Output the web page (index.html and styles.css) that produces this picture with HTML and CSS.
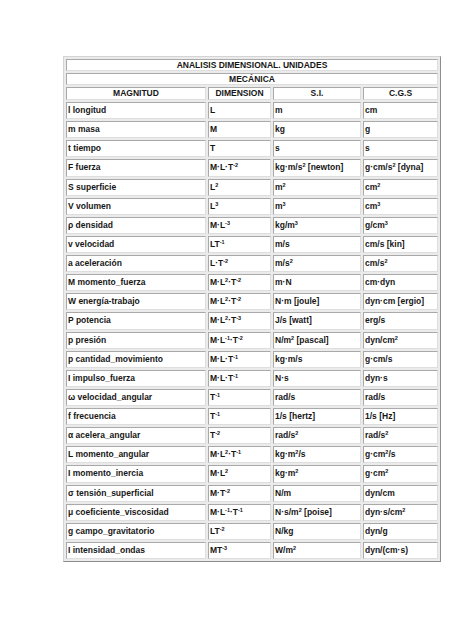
FILE: index.html
```html
<!DOCTYPE html>
<html lang="es">
<head>
<meta charset="utf-8">
<title>Analisis dimensional</title>
<link rel="stylesheet" href="styles.css">
</head>
<body>
<table class="units">
  <colgroup>
    <col class="c1"><col class="c2"><col class="c3"><col class="c4">
  </colgroup>
  <tr class="title"><th colspan="4">ANALISIS DIMENSIONAL. UNIDADES</th></tr>
  <tr class="section"><th colspan="4">MECÁNICA</th></tr>
  <tr class="head"><th>MAGNITUD</th><th>DIMENSION</th><th>S.I.</th><th>C.G.S</th></tr>
  <tr><td>l longitud</td><td>L</td><td>m</td><td>cm</td></tr>
  <tr><td>m masa</td><td>M</td><td>kg</td><td>g</td></tr>
  <tr><td>t tiempo</td><td>T</td><td>s</td><td>s</td></tr>
  <tr><td>F fuerza</td><td>M·L·T<sup>-2</sup></td><td>kg·m/s<sup>2</sup> [newton]</td><td>g·cm/s<sup>2</sup> [dyna]</td></tr>
  <tr><td>S superficie</td><td>L<sup>2</sup></td><td>m<sup>2</sup></td><td>cm<sup>2</sup></td></tr>
  <tr><td>V volumen</td><td>L<sup>3</sup></td><td>m<sup>3</sup></td><td>cm<sup>3</sup></td></tr>
  <tr><td>ρ densidad</td><td>M·L<sup>-3</sup></td><td>kg/m<sup>3</sup></td><td>g/cm<sup>3</sup></td></tr>
  <tr><td>v velocidad</td><td>LT<sup>-1</sup></td><td>m/s</td><td>cm/s [kin]</td></tr>
  <tr><td>a aceleración</td><td>L·T<sup>-2</sup></td><td>m/s<sup>2</sup></td><td>cm/s<sup>2</sup></td></tr>
  <tr><td>M momento_fuerza</td><td>M·L<sup>2</sup>·T<sup>-2</sup></td><td>m·N</td><td>cm·dyn</td></tr>
  <tr><td>W energía-trabajo</td><td>M·L<sup>2</sup>·T<sup>-2</sup></td><td>N·m [joule]</td><td>dyn·cm [ergio]</td></tr>
  <tr><td>P potencia</td><td>M·L<sup>2</sup>·T<sup>-3</sup></td><td>J/s [watt]</td><td>erg/s</td></tr>
  <tr><td>p presión</td><td>M·L<sup>-1</sup>·T<sup>-2</sup></td><td>N/m<sup>2</sup> [pascal]</td><td>dyn/cm<sup>2</sup></td></tr>
  <tr><td>p cantidad_movimiento</td><td>M·L·T<sup>-1</sup></td><td>kg·m/s</td><td>g·cm/s</td></tr>
  <tr><td>I impulso_fuerza</td><td>M·L·T<sup>-1</sup></td><td>N·s</td><td>dyn·s</td></tr>
  <tr><td>ω velocidad_angular</td><td>T<sup>-1</sup></td><td>rad/s</td><td>rad/s</td></tr>
  <tr><td>f frecuencia</td><td>T<sup>-1</sup></td><td>1/s [hertz]</td><td>1/s [Hz]</td></tr>
  <tr><td>α acelera_angular</td><td>T<sup>-2</sup></td><td>rad/s<sup>2</sup></td><td>rad/s<sup>2</sup></td></tr>
  <tr><td>L momento_angular</td><td>M·L<sup>2</sup>·T<sup>-1</sup></td><td>kg·m<sup>2</sup>/s</td><td>g·cm<sup>2</sup>/s</td></tr>
  <tr><td>I momento_inercia</td><td>M·L<sup>2</sup></td><td>kg·m<sup>2</sup></td><td>g·cm<sup>2</sup></td></tr>
  <tr><td>σ tensión_superficial</td><td>M·T<sup>-2</sup></td><td>N/m</td><td>dyn/cm</td></tr>
  <tr><td>μ coeficiente_viscosidad</td><td>M·L<sup>-1</sup>·T<sup>-1</sup></td><td>N·s/m<sup>2</sup> [poise]</td><td>dyn·s/cm<sup>2</sup></td></tr>
  <tr><td>g campo_gravitatorio</td><td>LT<sup>-2</sup></td><td>N/kg</td><td>dyn/g</td></tr>
  <tr><td>I intensidad_ondas</td><td>MT<sup>-3</sup></td><td>W/m<sup>2</sup></td><td>dyn/(cm·s)</td></tr>
</table>
</body>
</html>
```
FILE: styles.css
```css
html, body {
  margin: 0;
  padding: 0;
  background: #ffffff;
}

body {
  padding: 56px 0 0 63px;
  font-family: "Liberation Sans", Arial, sans-serif;
  font-weight: bold;
  font-size: 8.5px;
  color: #161616;
}

.units {
  width: 378px;
  table-layout: fixed;
  border-collapse: separate;
  border-spacing: 2px;
  border: 1px solid;
  border-color: #d4d4d4 #8e8e8e #8e8e8e #d4d4d4;
  background: #ebebeb;
}

.c1 { width: 140px; }
.c2 { width: 63px; }
.c3 { width: 88px; }
.c4 { width: 75px; }

.units th,
.units td {
  box-sizing: border-box;
  border: 1px solid;
  border-color: #a9a9a9 #dedede #dedede #a9a9a9;
  background: #ffffff;
  padding: 0 1px;
  line-height: 9px;
  height: 17.13px;
  white-space: nowrap;
  vertical-align: middle;
  font-weight: bold;
}

.units td {
  text-align: left;
}

.units th {
  text-align: center;
}

.title th { height: 12px; }
.section th { height: 11px; padding-top: 1px; }
.head th { height: 13px; }

sup {
  font-size: 5.5px;
  line-height: 0;
  vertical-align: 3px;
}
```
